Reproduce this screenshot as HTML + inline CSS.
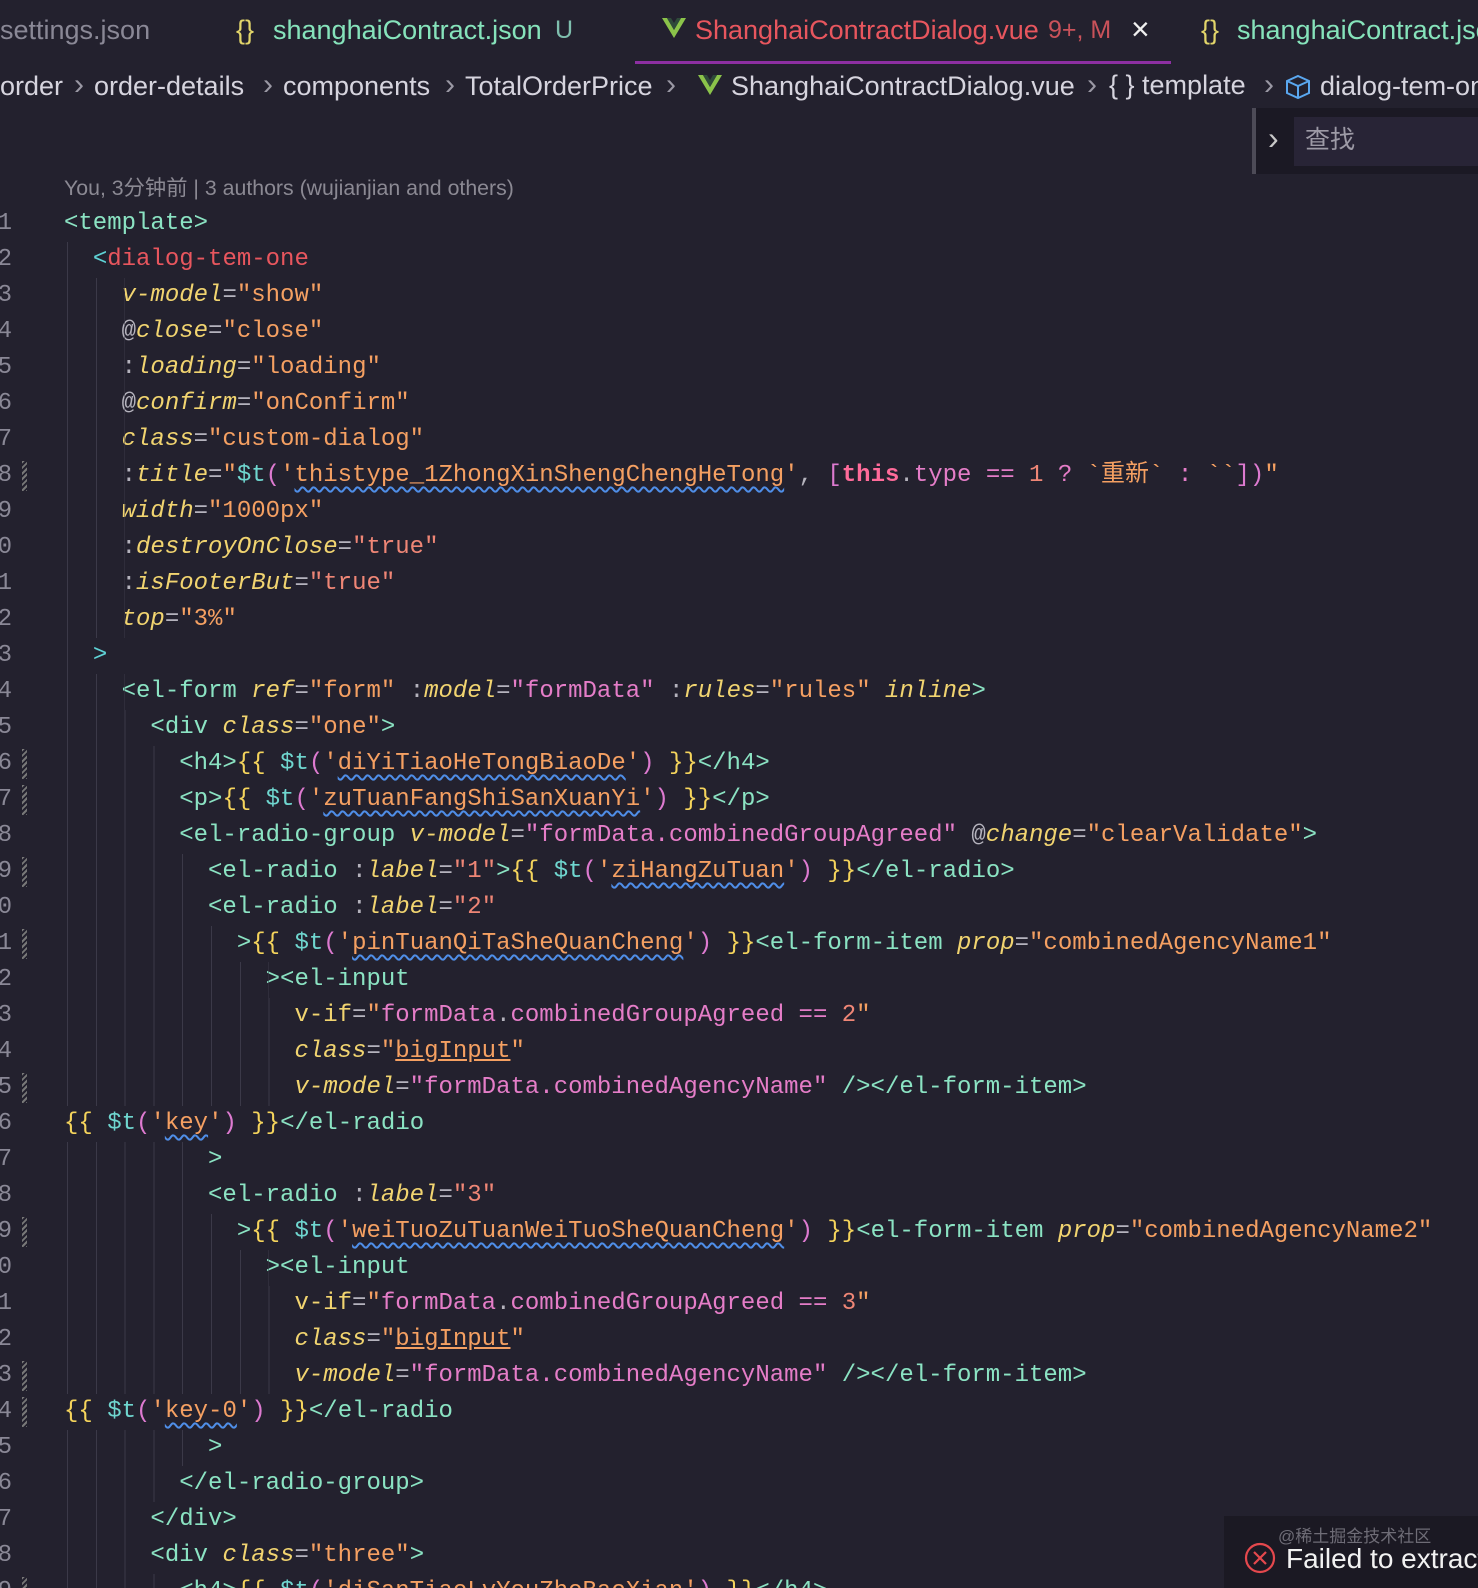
<!DOCTYPE html>
<html><head><meta charset="utf-8"><style>
*{margin:0;padding:0;box-sizing:border-box}
html,body{width:1478px;height:1588px;overflow:hidden;background:#23212e;position:relative}
.s{position:absolute;font-family:"Liberation Sans","Noto Sans CJK SC",sans-serif;white-space:pre;line-height:1}
#code{position:absolute;left:64px;top:206px;font-family:"Liberation Mono",monospace;font-size:24px;line-height:36px;color:#d8d8d8}
#code div{height:36px;position:relative;white-space:pre}
.g{position:absolute;left:3px;top:0;height:36px;background:repeating-linear-gradient(to right,#3b3948 0 1px,transparent 1px 28.8px)}
#ln{position:absolute;left:-60px;width:72px;top:206px;font-family:"Liberation Mono",monospace;font-size:24px;line-height:36px;text-align:right;color:#8a8896}
.t{color:#8be3c3}.b{color:#5fd3d6}.a{color:#f1d470;font-style:italic}.an{color:#f1d470}.e{color:#b5b3bd}.q{color:#f5a062}.n{color:#ef8676}.p{color:#e57dc8}.f{color:#6fd6cf}.k{color:#f5d45c}.pa{color:#dd7ad0}
.w{color:#f5a062;text-decoration:underline wavy #4f8ee8;text-underline-offset:5px;text-decoration-thickness:1.5px}
.th{color:#ff6b9a;font-weight:bold}
.h{position:absolute;left:22px;width:5px;height:30px;background:repeating-linear-gradient(135deg,#777 0 2px,transparent 2px 4px)}
.c{color:#9a98a4}
</style></head><body>
<!-- tabs -->
<div class="s" style="left:0;top:17px;font-size:27px;color:#8a8896">settings.json</div>
<div class="s" style="left:236px;top:17px;font-size:27px;color:#e2d56a">{}</div>
<div class="s" style="left:273px;top:17px;font-size:27px;color:#86e3bb">shanghaiContract.json</div>
<div class="s" style="left:555px;top:18px;font-size:25px;color:#7fbfae">U</div>
<svg style="position:absolute;left:662px;top:18px" width="24" height="20" viewBox="0 0 24 20"><path d="M0 0 L12 20 L24 0 H19 L12 12 L5 0Z" fill="#8bc34a"/><path d="M5 0 L12 12 L19 0 H15 L12 5 L9 0Z" fill="#2f4a3a"/></svg>
<div class="s" style="left:695px;top:17px;font-size:27px;color:#e8565e">ShanghaiContractDialog.vue</div>
<div class="s" style="left:1048px;top:18px;font-size:25px;color:#c9525a">9+, M</div>
<div class="s" style="left:1131px;top:13px;font-size:32px;color:#f0f0f0">×</div>
<div class="s" style="left:1201px;top:17px;font-size:27px;color:#e2d56a">{}</div>
<div class="s" style="left:1237px;top:17px;font-size:27px;color:#86e3bb">shanghaiContract.json</div>
<div style="position:absolute;left:635px;top:61px;width:536px;height:3px;background:#8d2fa2"></div>
<!-- breadcrumb -->
<div class="s" style="left:0;top:73px;font-size:27px;color:#d6d4de">order</div>
<div class="s c" style="left:74px;top:70px;font-size:30px">›</div>
<div class="s" style="left:94px;top:73px;font-size:27px;color:#d6d4de">order-details</div>
<div class="s c" style="left:263px;top:70px;font-size:30px">›</div>
<div class="s" style="left:283px;top:73px;font-size:27px;color:#d6d4de">components</div>
<div class="s c" style="left:445px;top:70px;font-size:30px">›</div>
<div class="s" style="left:465px;top:73px;font-size:27px;color:#d6d4de">TotalOrderPrice</div>
<div class="s c" style="left:666px;top:70px;font-size:30px">›</div>
<svg style="position:absolute;left:698px;top:75px" width="24" height="20" viewBox="0 0 24 20"><path d="M0 0 L12 20 L24 0 H19 L12 12 L5 0Z" fill="#8bc34a"/><path d="M5 0 L12 12 L19 0 H15 L12 5 L9 0Z" fill="#2f4a3a"/></svg>
<div class="s" style="left:731px;top:73px;font-size:27px;color:#d6d4de">ShanghaiContractDialog.vue</div>
<div class="s c" style="left:1087px;top:70px;font-size:30px">›</div>
<div class="s" style="left:1109px;top:72px;font-size:27px;color:#d6d4de">{ } template</div>
<div class="s c" style="left:1264px;top:70px;font-size:30px">›</div>
<svg style="position:absolute;left:1284px;top:74px" width="28" height="26" viewBox="0 0 28 26"><path d="M14 2 L25 7 V19 L14 24 L3 19 V7Z M3 7 L14 12 L25 7 M14 12 V24" fill="none" stroke="#5aa7ef" stroke-width="2"/></svg>
<div class="s" style="left:1320px;top:73px;font-size:27px;color:#d6d4de">dialog-tem-one</div>
<!-- find widget -->
<div style="position:absolute;left:1252px;top:108px;width:226px;height:66px;background:#1b1924;border-left:4px solid #4d4b57"></div>
<div class="s" style="left:1268px;top:122px;font-size:32px;color:#c8c8c8">›</div>
<div style="position:absolute;left:1294px;top:117px;width:184px;height:49px;background:#282436"></div>
<div class="s" style="left:1305px;top:128px;font-size:25px;color:#9d9aa6">查找</div>
<!-- blame -->
<div class="s" style="left:64px;top:178px;font-size:21.3px;color:#8b8993">You, 3分钟前 | 3 authors (wujianjian and others)</div>
<!-- gutter hatches -->
<div class="h" style="top:461px"></div><div class="h" style="top:749px"></div><div class="h" style="top:785px"></div><div class="h" style="top:857px"></div><div class="h" style="top:929px"></div><div class="h" style="top:1073px"></div><div class="h" style="top:1217px"></div><div class="h" style="top:1361px"></div><div class="h" style="top:1397px"></div><div class="h" style="top:1577px"></div>
<div id="ln">1<br>2<br>3<br>4<br>5<br>6<br>7<br>8<br>9<br>10<br>11<br>12<br>13<br>14<br>15<br>16<br>17<br>18<br>19<br>20<br>21<br>22<br>23<br>24<br>25<br>26<br>27<br>28<br>29<br>30<br>31<br>32<br>33<br>34<br>35<br>36<br>37<br>38<br>39</div>
<div id="code"><div><span class="t">&lt;template&gt;</span></div><div><i class="g" style="width:29px"></i>  <span class="b">&lt;</span><span style="color:#e8565e">dialog-tem-one</span></div><div><i class="g" style="width:58px"></i>    <span class="a">v-model</span><span class="e">=</span><span class="q">"show"</span></div><div><i class="g" style="width:58px"></i>    <span class="e">@</span><span class="a">close</span><span class="e">=</span><span class="q">"close"</span></div><div><i class="g" style="width:58px"></i>    <span class="e">:</span><span class="a">loading</span><span class="e">=</span><span class="q">"loading"</span></div><div><i class="g" style="width:58px"></i>    <span class="e">@</span><span class="a">confirm</span><span class="e">=</span><span class="q">"onConfirm"</span></div><div><i class="g" style="width:58px"></i>    <span class="a">class</span><span class="e">=</span><span class="q">"custom-dialog"</span></div><div><i class="g" style="width:58px"></i>    <span class="e">:</span><span class="a">title</span><span class="e">=</span><span class="q">"</span><span class="f">$t</span><span class="pa">(</span><span class="q">'</span><span class="w">thistype_1ZhongXinShengChengHeTong</span><span class="q">'</span><span class="e">, </span><span class="pa">[</span><span class="th">this</span><span class="e">.</span><span class="p">type</span> <span class="p">==</span> <span class="n">1</span> <span class="p">?</span> <span class="q">`重新`</span> <span class="p">:</span> <span class="q">``</span><span class="pa">])</span><span class="q">"</span></div><div><i class="g" style="width:58px"></i>    <span class="a">width</span><span class="e">=</span><span class="q">"1000px"</span></div><div><i class="g" style="width:58px"></i>    <span class="e">:</span><span class="a">destroyOnClose</span><span class="e">=</span><span class="n">"true"</span></div><div><i class="g" style="width:58px"></i>    <span class="e">:</span><span class="a">isFooterBut</span><span class="e">=</span><span class="n">"true"</span></div><div><i class="g" style="width:58px"></i>    <span class="a">top</span><span class="e">=</span><span class="q">"3%"</span></div><div><i class="g" style="width:29px"></i>  <span class="b">&gt;</span></div><div><i class="g" style="width:58px"></i>    <span class="t">&lt;el-form</span> <span class="a">ref</span><span class="e">=</span><span class="q">"form"</span> <span class="e">:</span><span class="a">model</span><span class="e">=</span><span class="p">"formData"</span> <span class="e">:</span><span class="a">rules</span><span class="e">=</span><span class="q">"rules"</span> <span class="a">inline</span><span class="t">&gt;</span></div><div><i class="g" style="width:86px"></i>      <span class="t">&lt;div</span> <span class="a">class</span><span class="e">=</span><span class="q">"one"</span><span class="t">&gt;</span></div><div><i class="g" style="width:115px"></i>        <span class="t">&lt;h4&gt;</span><span class="k">{{</span> <span class="f">$t</span><span class="pa">(</span><span class="q">'</span><span class="w">diYiTiaoHeTongBiaoDe</span><span class="q">'</span><span class="pa">)</span> <span class="k">}}</span><span class="t">&lt;/h4&gt;</span></div><div><i class="g" style="width:115px"></i>        <span class="t">&lt;p&gt;</span><span class="k">{{</span> <span class="f">$t</span><span class="pa">(</span><span class="q">'</span><span class="w">zuTuanFangShiSanXuanYi</span><span class="q">'</span><span class="pa">)</span> <span class="k">}}</span><span class="t">&lt;/p&gt;</span></div><div><i class="g" style="width:115px"></i>        <span class="t">&lt;el-radio-group</span> <span class="a">v-model</span><span class="e">=</span><span class="p">"formData.combinedGroupAgreed"</span> <span class="e">@</span><span class="a">change</span><span class="e">=</span><span class="q">"clearValidate"</span><span class="t">&gt;</span></div><div><i class="g" style="width:144px"></i>          <span class="t">&lt;el-radio</span> <span class="e">:</span><span class="a">label</span><span class="e">=</span><span class="n">"1"</span><span class="t">&gt;</span><span class="k">{{</span> <span class="f">$t</span><span class="pa">(</span><span class="q">'</span><span class="w">ziHangZuTuan</span><span class="q">'</span><span class="pa">)</span> <span class="k">}}</span><span class="t">&lt;/el-radio&gt;</span></div><div><i class="g" style="width:144px"></i>          <span class="t">&lt;el-radio</span> <span class="e">:</span><span class="a">label</span><span class="e">=</span><span class="n">"2"</span></div><div><i class="g" style="width:173px"></i>            <span class="t">&gt;</span><span class="k">{{</span> <span class="f">$t</span><span class="pa">(</span><span class="q">'</span><span class="w">pinTuanQiTaSheQuanCheng</span><span class="q">'</span><span class="pa">)</span> <span class="k">}}</span><span class="t">&lt;el-form-item</span> <span class="a">prop</span><span class="e">=</span><span class="q">"combinedAgencyName1"</span></div><div><i class="g" style="width:202px"></i>              <span class="t">&gt;&lt;el-input</span></div><div><i class="g" style="width:230px"></i>                <span class="an">v-if</span><span class="e">=</span><span class="q">"</span><span class="p">formData</span><span class="e">.</span><span class="p">combinedGroupAgreed</span> <span class="p">==</span> <span class="n">2</span><span class="q">"</span></div><div><i class="g" style="width:230px"></i>                <span class="a">class</span><span class="e">=</span><span class="q">"<u>bigInput</u>"</span></div><div><i class="g" style="width:230px"></i>                <span class="a">v-model</span><span class="e">=</span><span class="p">"formData.combinedAgencyName"</span> <span class="t">/&gt;&lt;/el-form-item&gt;</span></div><div><span class="k">{{</span> <span class="f">$t</span><span class="pa">(</span><span class="q">'</span><span class="w">key</span><span class="q">'</span><span class="pa">)</span> <span class="k">}}</span><span class="t">&lt;/el-radio</span></div><div><i class="g" style="width:144px"></i>          <span class="t">&gt;</span></div><div><i class="g" style="width:144px"></i>          <span class="t">&lt;el-radio</span> <span class="e">:</span><span class="a">label</span><span class="e">=</span><span class="n">"3"</span></div><div><i class="g" style="width:173px"></i>            <span class="t">&gt;</span><span class="k">{{</span> <span class="f">$t</span><span class="pa">(</span><span class="q">'</span><span class="w">weiTuoZuTuanWeiTuoSheQuanCheng</span><span class="q">'</span><span class="pa">)</span> <span class="k">}}</span><span class="t">&lt;el-form-item</span> <span class="a">prop</span><span class="e">=</span><span class="q">"combinedAgencyName2"</span></div><div><i class="g" style="width:202px"></i>              <span class="t">&gt;&lt;el-input</span></div><div><i class="g" style="width:230px"></i>                <span class="an">v-if</span><span class="e">=</span><span class="q">"</span><span class="p">formData</span><span class="e">.</span><span class="p">combinedGroupAgreed</span> <span class="p">==</span> <span class="n">3</span><span class="q">"</span></div><div><i class="g" style="width:230px"></i>                <span class="a">class</span><span class="e">=</span><span class="q">"<u>bigInput</u>"</span></div><div><i class="g" style="width:230px"></i>                <span class="a">v-model</span><span class="e">=</span><span class="p">"formData.combinedAgencyName"</span> <span class="t">/&gt;&lt;/el-form-item&gt;</span></div><div><span class="k">{{</span> <span class="f">$t</span><span class="pa">(</span><span class="q">'</span><span class="w">key-0</span><span class="q">'</span><span class="pa">)</span> <span class="k">}}</span><span class="t">&lt;/el-radio</span></div><div><i class="g" style="width:144px"></i>          <span class="t">&gt;</span></div><div><i class="g" style="width:115px"></i>        <span class="t">&lt;/el-radio-group&gt;</span></div><div><i class="g" style="width:86px"></i>      <span class="t">&lt;/div&gt;</span></div><div><i class="g" style="width:86px"></i>      <span class="t">&lt;div</span> <span class="a">class</span><span class="e">=</span><span class="q">"three"</span><span class="t">&gt;</span></div><div><i class="g" style="width:115px"></i>        <span class="t">&lt;h4&gt;</span><span class="k">{{</span> <span class="f">$t</span><span class="pa">(</span><span class="q">'</span><span class="w">diSanTiaoLvYouZheBaoXian</span><span class="q">'</span><span class="pa">)</span> <span class="k">}}</span><span class="t">&lt;/h4&gt;</span></div></div>
<!-- notification -->
<div style="position:absolute;left:1224px;top:1516px;width:254px;height:72px;background:#1b1923"></div>
<div class="s" style="left:1278px;top:1528px;font-size:17px;color:#6e6c76">@稀土掘金技术社区</div>
<svg style="position:absolute;left:1244px;top:1542px" width="32" height="32" viewBox="0 0 32 32"><circle cx="16" cy="16" r="14" fill="none" stroke="#e5484d" stroke-width="2.2"/><path d="M10 10 L22 22 M22 10 L10 22" stroke="#e5484d" stroke-width="2.2"/></svg>
<div class="s" style="left:1286px;top:1545px;font-size:28px;color:#f2f2f2">Failed to extract</div>
</body></html>
